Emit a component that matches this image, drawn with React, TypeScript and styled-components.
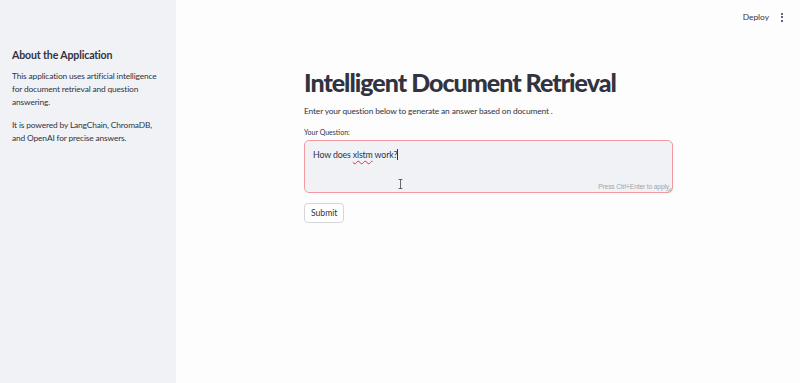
import styled, { createGlobalStyle } from 'styled-components';

const Global = createGlobalStyle`
  html, body {
    margin: 0;
    padding: 0;
    height: 100%;
  }
  body {
    font-family: 'Lato', 'Noto Sans', sans-serif;
    color: #31333f;
    background: #fff;
  }
  #root {
    height: 100%;
  }
`;

const Page = styled.div`
  display: flex;
  width: 800px;
  height: 383px;
  overflow: hidden;
`;

const Sidebar = styled.aside`
  width: 164px;
  flex-shrink: 0;
  background: #f0f2f6;
  padding: 47px 0 0 12px;
`;

const SideTitle = styled.h3`
  margin: 0 0 7px;
  font-size: 10.6px;
  font-weight: 700;
  color: #31333f;
  line-height: 16px;
  letter-spacing: -0.15px;
`;

const SideText = styled.p`
  margin: 0 0 9.5px;
  font-size: 8.4px;
  line-height: 13.2px;
  letter-spacing: -0.15px;
  color: #31333f;
  width: 152px;
`;

const Main = styled.main`
  flex: 1;
  display: flex;
  flex-direction: column;
  background: #fdfdfe;
`;

const Header = styled.header`
  display: flex;
  justify-content: flex-end;
  align-items: center;
  gap: 12px;
  height: 34px;
  padding-right: 17px;
`;

const Deploy = styled.span`
  font-size: 8.4px;
  color: #31333f;
`;

const Dots = styled.span`
  display: flex;
  flex-direction: column;
  gap: 1.5px;
  & > i {
    width: 2px;
    height: 2px;
    border-radius: 50%;
    background: #31333f;
  }
`;

const Content = styled.section`
  width: 369px;
  margin: 32px 0 0 128px;
  display: flex;
  flex-direction: column;
`;

const Title = styled.h1`
  margin: 0;
  font-size: 25px;
  font-weight: 900;
  line-height: 32px;
  color: #31333f;
  letter-spacing: -1px;
`;

const Lead = styled.p`
  margin: 7px 0 0;
  font-size: 8.4px;
  line-height: 13px;
  letter-spacing: -0.15px;
`;

const Label = styled.label`
  margin-top: 9px;
  font-size: 7px;
  line-height: 10px;
`;

const Field = styled.div`
  position: relative;
  margin-top: 3px;
  height: 53px;
  border: 1px solid #f39aa0;
  border-radius: 5px;
  background: #f0f2f6;
  padding: 7px 8px;
  box-sizing: border-box;
  font-size: 8.8px;
  line-height: 13px;
  letter-spacing: -0.15px;
`;

const Wavy = styled.span`
  text-decoration: underline wavy #e0393e;
  text-decoration-thickness: 0.8px;
  text-underline-offset: 2px;
`;

const Caret = styled.span`
  display: inline-block;
  width: 1px;
  height: 11px;
  background: #31333f;
  vertical-align: -2px;
`;

const Hint = styled.span`
  position: absolute;
  right: 3px;
  bottom: -1px;
  font-family: 'Liberation Sans', Arial, sans-serif;
  font-size: 6.7px;
  color: #a3a5ad;
`;

const Grip = styled.svg`
  position: absolute;
  right: 0;
  bottom: 0;
`;

const Cursor = styled.svg`
  position: absolute;
  left: 93px;
  top: 38px;
`;

const Button = styled.button`
  margin-top: 10px;
  align-self: flex-start;
  height: 20px;
  padding: 0 6px;
  background: #fff;
  border: 1px solid #d6d6d9;
  border-radius: 4px;
  font-family: inherit;
  font-size: 8.6px;
  color: #31333f;
`;

export default function App() {
  return (
    <Page>
      <Global />
      <Sidebar>
        <SideTitle>About the Application</SideTitle>
        <SideText>
          This application uses artificial intelligence for document retrieval
          and question answering.
        </SideText>
        <SideText>
          It is powered by LangChain, ChromaDB, and OpenAI for precise answers.
        </SideText>
      </Sidebar>
      <Main>
        <Header>
          <Deploy>Deploy</Deploy>
          <Dots>
            <i />
            <i />
            <i />
          </Dots>
        </Header>
        <Content>
          <Title>Intelligent Document Retrieval</Title>
          <Lead>
            Enter your question below to generate an answer based on document .
          </Lead>
          <Label>Your Question:</Label>
          <Field>
            How does <Wavy>xlstm</Wavy> work?
            <Caret />
            <Hint>Press Ctrl+Enter to apply</Hint>
            <Grip width="5" height="5" viewBox="0 0 5 5">
              <path d="M4.5 1 L1 4.5 M4.5 3 L3 4.5" stroke="#777" strokeWidth="0.7" />
            </Grip>
            <Cursor width="5" height="10" viewBox="0 0 5 10">
              <path
                d="M0.5 0.5 H4.5 M2.5 0.5 V9.5 M0.5 9.5 H4.5"
                stroke="#444"
                strokeWidth="0.8"
                fill="none"
              />
            </Cursor>
          </Field>
          <Button>Submit</Button>
        </Content>
      </Main>
    </Page>
  );
}
